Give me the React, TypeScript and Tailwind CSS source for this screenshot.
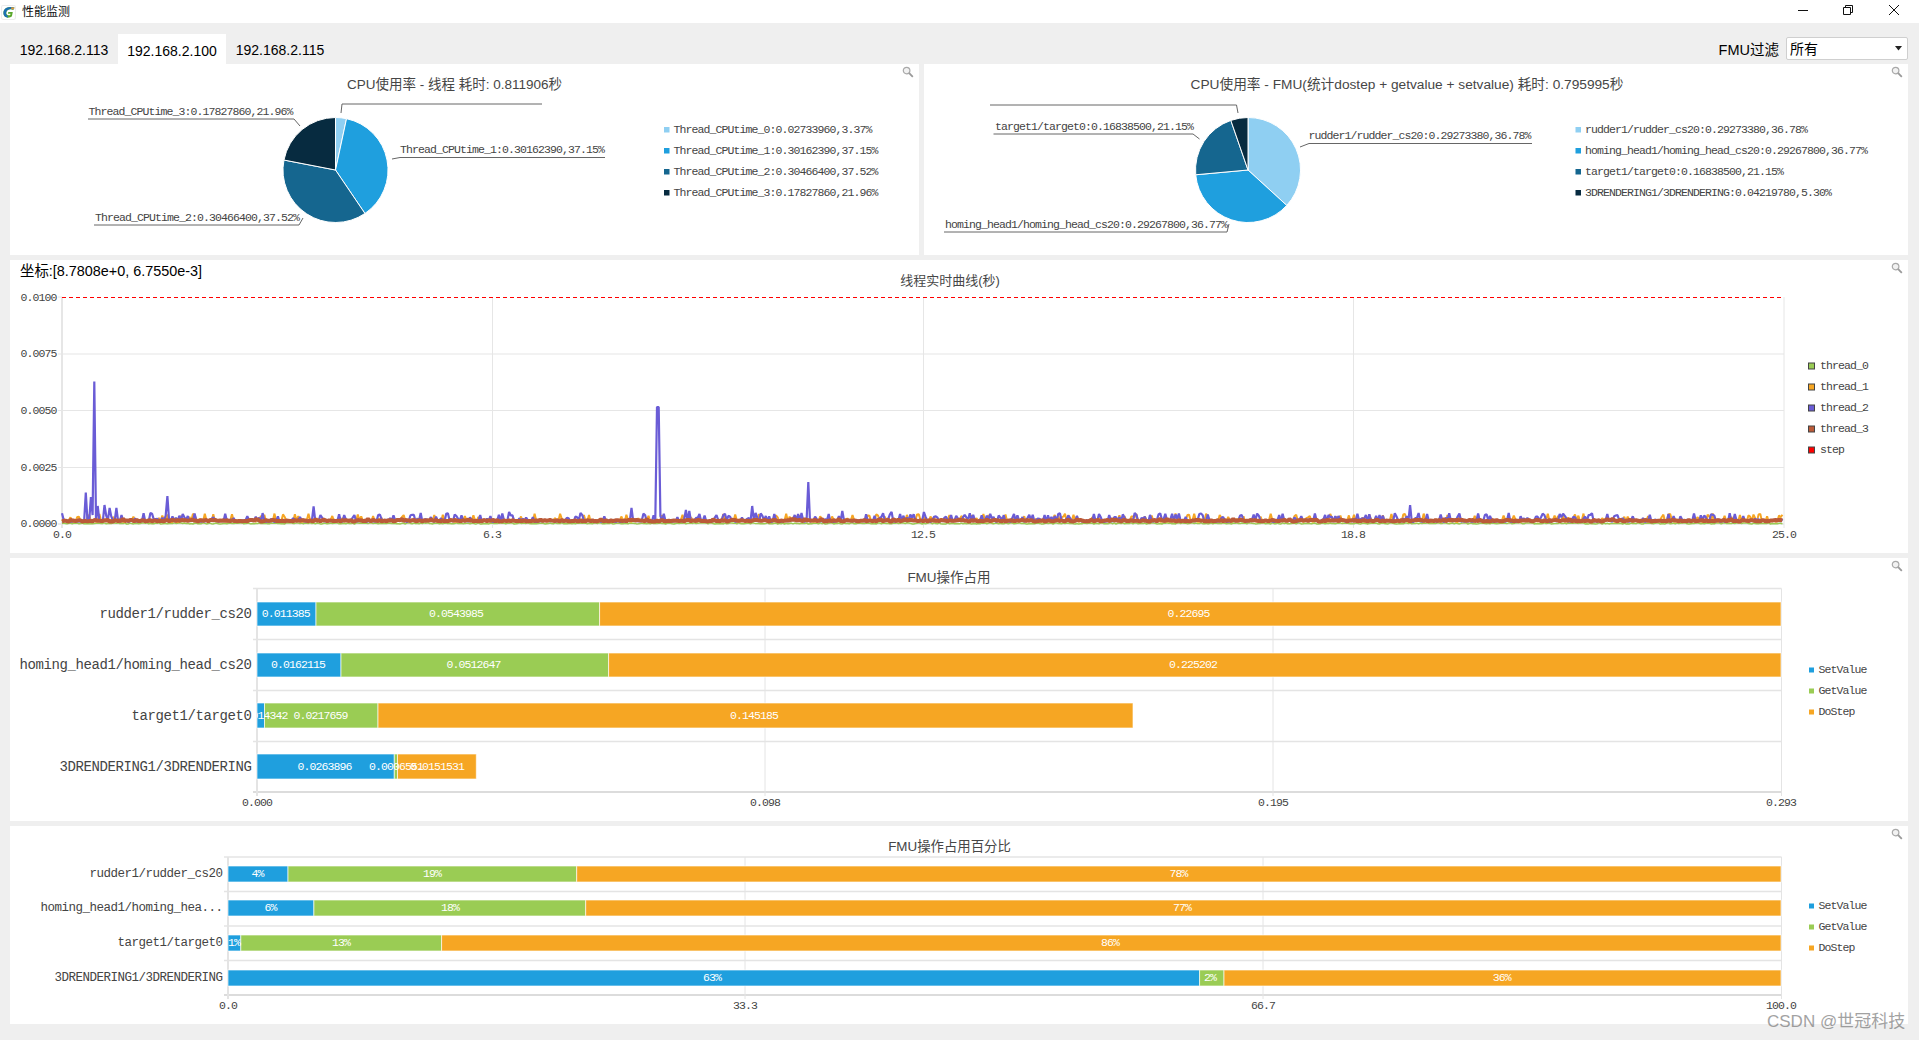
import React from "react";

const MONO = '"Liberation Mono", monospace';
const CJK = '"Liberation Sans", "Noto Sans CJK SC", sans-serif';
const C = { l: "#8fcff2", b: "#1f9fde", d: "#15668f", k: "#072b40", g: "#9acc54", o: "#f6a623", p: "#6a5cd6", r: "#bb5a38" };

function T({ x, y, s, a = "start", size = 11.5, ls = -0.9, fill = "#444", clip }: { x: number; y: number; s: string; a?: "start" | "middle" | "end"; size?: number; ls?: number; fill?: string; clip?: string }) {
  return (
    <text x={x} y={y - 0.4} textAnchor={a} dominantBaseline="central" fontFamily={MONO} fontSize={size} letterSpacing={ls} fill={fill} clipPath={clip}>
      {s}
    </text>
  );
}

function Title({ x, y, s, size = 13.5 }: { x: number; y: number; s: string; size?: number }) {
  return (
    <text x={x} y={y} textAnchor="middle" dominantBaseline="central" fontFamily={CJK} fontSize={size} fill="#464646">
      {s}
    </text>
  );
}

function Lens() {
  return (
    <svg width="12" height="12" viewBox="0 0 12 12" className="absolute top-[2px] right-[5px]">
      <circle cx="4.6" cy="4.6" r="3.3" fill="#f2f2f2" stroke="#a9a9a9" strokeWidth="1.2" />
      <path d="M7.2 7.2 L10.8 10.8" stroke="#999" strokeWidth="1.8" />
    </svg>
  );
}

function Pie({ cx, cy, r, vals }: { cx: number; cy: number; r: number; vals: [number, string][] }) {
  let a = -Math.PI / 2;
  return (
    <g>
      {vals.map(([v, c], i) => {
        const b = a + (v / 100) * Math.PI * 2;
        const d = `M${cx} ${cy}L${cx + r * Math.cos(a)} ${cy + r * Math.sin(a)}A${r} ${r} 0 ${v > 50 ? 1 : 0} 1 ${cx + r * Math.cos(b)} ${cy + r * Math.sin(b)}Z`;
        a = b;
        return <path key={i} d={d} fill={c} stroke="#fff" strokeWidth="1" />;
      })}
    </g>
  );
}

function Leader({ pts }: { pts: string }) {
  return <polyline points={pts} fill="none" stroke="#666" strokeWidth="1" />;
}

const LEG_Y = [129.5, 150.5, 171.5, 192.5];
function PieLegend({ x, tx, items }: { x: number; tx: number; items: [string, string][] }) {
  return (
    <g>
      {items.map(([s, c], i) => (
        <g key={s}>
          <rect x={x} y={LEG_Y[i] - 2.5} width="5.5" height="5.5" fill={c} />
          <T x={tx} y={LEG_Y[i]} s={s} />
        </g>
      ))}
    </g>
  );
}

function rng(seed: number) {
  let s = seed;
  return () => {
    s = (s * 1664525 + 1013904223) >>> 0;
    let t = s ^ (s >>> 15);
    t = Math.imul(t, 0x2c1b3c6d) >>> 0;
    t ^= t >>> 12;
    return (t >>> 0) / 4294967296;
  };
}

const SPIKES: [number, number][] = [
  [86.5, 492.5], [91, 497], [93.5, 381.5], [98.5, 506], [104, 505], [109, 508], [116, 508], [121, 515], [151, 513], [168, 496], [187, 516],
  [313, 506.5], [320, 515], [355, 515], [379, 515], [421.5, 513], [457, 516], [490, 516], [509, 512], [581, 513], [632, 508], [645, 515], [657.5, 407], [658.5, 407],
  [686, 510], [689, 511], [753, 506], [755, 513], [765, 516], [795, 515], [798, 514], [801.5, 513], [808, 482], [809, 482], [829, 514], [842, 511], [892, 512], [924, 512], [964, 515],
  [1109, 515], [1200, 514], [1280, 515], [1339, 516], [1380, 515], [1410, 505], [1418, 513], [1490, 516], [1560, 514], [1607, 514], [1668, 514], [1735, 514],
];

const STEP = 1.7;
function series(seed: number, fn: (r: number, r2: number) => number, spikes?: [number, number][]) {
  const r = rng(seed);
  const ys: number[] = [];
  const n = Math.floor((1784 - 62) / STEP);
  for (let i = 0; i <= n; i++) ys.push(fn(r(), r()));
  if (spikes) {
    for (const [x, top] of spikes) {
      const i = Math.round((x - 62) / STEP);
      ys[i] = top;
    }
  }
  return ys.map((y, i) => `${i ? "L" : "M"}${(62 + i * STEP).toFixed(1)} ${y.toFixed(1)}`).join("");
}

const GREEN = series(11, (a) => 524 - a * 1.2);
const ORANGE = series(23, (a, b) => 522 - 2 * a - (b > 0.78 ? 2 + a * 4.5 : 0));
const PURPLE = series(37, (a, b) => 522 - 2 * a - (b > 0.7 ? 2 + a * 5 : 0), SPIKES);
const BROWN = series(53, (a, b) => 521.5 - 1.6 * a - (b > 0.93 ? 1.2 : 0));

function Seg({ x0, x1, y0, y1, c }: { x0: number; x1: number; y0: number; y1: number; c: string }) {
  return <rect x={x0} y={y0} width={x1 - x0} height={y1 - y0} fill={c} stroke="#fff" strokeOpacity="0.65" strokeWidth="1" />;
}

function Frame({ l, r, rows, vs }: { l: number; r: number; rows: number[]; vs: number[] }) {
  return (
    <g stroke="#e4e4e4" strokeWidth="1">
      {rows.map((y, i) => (
        <line key={i} x1={l - 4} x2={r} y1={y} y2={y} strokeWidth={i === rows.length - 1 ? 2 : 1.3} stroke={i === rows.length - 1 ? "#dcdcdc" : "#e4e4e4"} />
      ))}
      {vs.map((x, i) => (
        <line key={i} x1={x} x2={x} y1={rows[0]} y2={rows[rows.length - 1] + 4} strokeWidth={i === 0 ? 2 : 1} />
      ))}
    </g>
  );
}

function BarLegend({ ys }: { ys: number[] }) {
  const items: [string, string][] = [["SetValue", C.b], ["GetValue", C.g], ["DoStep", C.o]];
  return (
    <g>
      {items.map(([s, c], i) => (
        <g key={s}>
          <rect x="1809" y={ys[i] - 2.5} width="5" height="5" fill={c} />
          <T x={1818.5} y={ys[i]} s={s} />
        </g>
      ))}
    </g>
  );
}

type Row = { label: string; y0: number; y1: number; ly: number; tY: number; segs: [number, number, string, number, string][] };

const ROWS_A: Row[] = [
  { label: "rudder1/rudder_cs20", y0: 602, y1: 626, ly: 614.5, tY: 613.5, segs: [[257, 316, C.b, 285.7, "0.011385"], [316, 599.6, C.g, 456, "0.0543985"], [599.6, 1781, C.o, 1188.5, "0.22695"]] },
  { label: "homing_head1/homing_head_cs20", y0: 653, y1: 677, ly: 665.5, tY: 664.5, segs: [[257, 341, C.b, 298, "0.0162115"], [341, 608.6, C.g, 473.5, "0.0512647"], [608.6, 1781, C.o, 1193, "0.225202"]] },
  { label: "target1/target0", y0: 703, y1: 728, ly: 716.5, tY: 715.5, segs: [[257, 264.5, C.b, 260.5, "0.0014342"], [264.5, 378, C.g, 320.4, "0.0217659"], [378, 1133, C.o, 754, "0.145185"]] },
  { label: "3DRENDERING1/3DRENDERING", y0: 754, y1: 779, ly: 767.5, tY: 766.5, segs: [[257, 394.3, C.b, 324.5, "0.0263896"], [394.3, 397.5, C.g, 396, "0.0006551"], [397.5, 476.3, C.o, 437, "0.0151531"]] },
];

const ROWS_B: Row[] = [
  { label: "rudder1/rudder_cs20", y0: 866, y1: 882, ly: 874.5, tY: 873.5, segs: [[228, 288, C.b, 257.5, "4%"], [288, 576.7, C.g, 432, "19%"], [576.7, 1781, C.o, 1178.6, "78%"]] },
  { label: "homing_head1/homing_hea...", y0: 900, y1: 916, ly: 908.5, tY: 908, segs: [[228, 313.9, C.b, 270.6, "6%"], [313.9, 585.7, C.g, 450, "18%"], [585.7, 1781, C.o, 1182, "77%"]] },
  { label: "target1/target0", y0: 935, y1: 951, ly: 943.5, tY: 942.5, segs: [[228, 240.8, C.b, 234, "1%"], [240.8, 441.6, C.g, 341, "13%"], [441.6, 1781, C.o, 1110, "86%"]] },
  { label: "3DRENDERING1/3DRENDERING", y0: 970, y1: 986, ly: 978.5, tY: 977.5, segs: [[228, 1199.6, C.b, 712, "63%"], [1199.6, 1224, C.g, 1210, "2%"], [1224, 1781, C.o, 1501.7, "36%"]] },
];

function Bars({ rows, rx, size, ls, clip }: { rows: Row[]; rx: number; size: number; ls: number; clip: string }) {
  return (
    <g>
      {rows.map((r) => (
        <g key={r.label}>
          <T x={rx} y={r.ly} s={r.label} a="end" size={size} ls={ls} />
          {r.segs.map(([a, b, c], i) => (
            <Seg key={i} x0={a} x1={b} y0={r.y0} y1={r.y1} c={c} />
          ))}
          {r.segs.map(([, , , tx, s], i) => (
            <T key={i} x={tx} y={r.tY} s={s} a="middle" fill="#fff" clip={clip} />
          ))}
        </g>
      ))}
    </g>
  );
}

function Tab({ label, active }: { label: string; active?: boolean }) {
  return (
    <div className={active ? "w-[108px] h-[30px] flex items-center justify-center bg-white pt-[5px] text-[14px] text-black" : "w-[108px] h-[30px] flex items-center justify-center pt-[3px] text-[14px] text-black"}>
      {label}
    </div>
  );
}

export default function App() {
  return (
    <div className="w-full h-[1040px] overflow-hidden flex flex-col bg-[#efefef] relative font-['Liberation_Sans','Noto_Sans_CJK_SC',sans-serif]">
      <div className="h-[23px] bg-white flex items-center shrink-0">
        <svg width="15" height="15" viewBox="0 0 14 14" className="ml-[1px] mt-[1px]">
          <rect x="0.5" y="0.5" width="13" height="13" rx="1.5" fill="#fff" stroke="#ececec" />
          <path d="M12.6 2.6 C9.4 1.2 4.6 1.6 2.8 5 C1.4 8.4 3 11.8 6.4 11.8 C8.2 11.8 9.6 11 10.2 10.4 L11 6.6 H6.8 L6.4 8.2 H8.9 L8.6 9.4 C6.6 10.2 4.6 9.2 5 6.8 C5.5 4.2 8.8 3.2 11.4 4.4 Z" fill="#5aa82c" />
          <path d="M2.8 5 C1.4 8.4 3 11.8 6.4 11.8 L6.2 10 C4.6 9.6 4.4 8 5 6.4 C6 4 9 3.2 11.4 4.4 L12.6 2.6 C9.4 1.2 4.6 1.6 2.8 5 Z" fill="#1b6fb3" />
          <path d="M12.6 2.6 C11.6 2.2 10.6 2 9.6 2 L9.4 3.6 C10.2 3.7 10.8 4 11.4 4.4 Z" fill="#e99a2e" />
        </svg>
        <span className="ml-[6px] text-[12px] text-[#111]">性能监测</span>
        <div className="ml-auto flex items-center mb-[3px]">
          <svg width="10" height="10" viewBox="0 0 10 10" className="mr-[35px]"><path d="M0 5.5H10" stroke="#111" strokeWidth="1" /></svg>
          <svg width="10" height="10" viewBox="0 0 10 10" className="mr-[36px]"><path d="M2.5 2.5V0.5H9.5V7.5H7.5M0.5 2.5H7.5V9.5H0.5Z" fill="none" stroke="#111" strokeWidth="1" /></svg>
          <svg width="10" height="10" viewBox="0 0 10 10" className="mr-[20px]"><path d="M0 0L10 10M10 0L0 10" stroke="#111" strokeWidth="1" /></svg>
        </div>
      </div>

      <div className="h-[41px] flex items-end pl-[10px] pr-[11px] shrink-0">
        <Tab label="192.168.2.113" />
        <Tab label="192.168.2.100" active />
        <Tab label="192.168.2.115" />
        <div className="ml-auto flex items-center mb-[4px]">
          <span className="text-[14.5px] leading-[20px] text-black mr-[7px] mt-[3px]">FMU过滤</span>
          <div className="w-[122px] h-[23px] bg-white border border-[#cfcfcf] rounded-[2px] flex items-center pl-[3px] pr-[3px] text-[14px] text-black">
            <span className="mt-[2px]">所有</span>
            <svg width="7" height="5" viewBox="0 0 7 5" className="ml-auto mr-[2px]"><path d="M0 0H7L3.5 4.5Z" fill="#222" /></svg>
          </div>
        </div>
      </div>

      <div className="flex flex-col gap-[5px] pl-[10px] pr-[11px]">
        <div className="flex gap-[5px] h-[191px]">
          <div className="relative w-[909px] bg-white">
            <Lens />
            <svg viewBox="10 64 909 191" className="block w-full h-full">
              <Title x={454.5} y={84} s="CPU使用率 - 线程 耗时: 0.811906秒" />
              <Pie cx={335.5} cy={170} r={52.5} vals={[[3.37, C.l], [37.15, C.b], [37.52, C.d], [21.96, C.k]]} />
              <Leader pts="341,113 342,104 542,104" />
              <Leader pts="88,119 294,119 300,126" />
              <Leader pts="605,157.5 400,157.5 392,159" />
              <Leader pts="94,225 299,225 303,218" />
              <T x={88.5} y={112} s="Thread_CPUtime_3:0.17827860,21.96%" />
              <T x={400} y={150} s="Thread_CPUtime_1:0.30162390,37.15%" />
              <T x={95} y={218} s="Thread_CPUtime_2:0.30466400,37.52%" />
              <PieLegend x={664} tx={673.5} items={[["Thread_CPUtime_0:0.02733960,3.37%", C.l], ["Thread_CPUtime_1:0.30162390,37.15%", C.b], ["Thread_CPUtime_2:0.30466400,37.52%", C.d], ["Thread_CPUtime_3:0.17827860,21.96%", C.k]]} />
            </svg>
          </div>
          <div className="relative flex-1 bg-white">
            <Lens />
            <svg viewBox="924 64 984 191" className="block w-full h-full">
              <Title x={1407} y={84} s="CPU使用率 - FMU(统计dostep + getvalue + setvalue) 耗时: 0.795995秒" size={13.7} />
              <Pie cx={1248} cy={170} r={52.5} vals={[[36.78, C.l], [36.77, C.b], [21.15, C.d], [5.3, C.k]]} />
              <Leader pts="1238,113 1236.5,105 990,105" />
              <Leader pts="993.5,134 1193,134 1199.5,139" />
              <Leader pts="944,232 1227,232 1229,224" />
              <Leader pts="1532,143.5 1309,143.5 1300,147" />
              <T x={995} y={127} s="target1/target0:0.16838500,21.15%" />
              <T x={945} y={225} s="homing_head1/homing_head_cs20:0.29267800,36.77%" />
              <T x={1308.5} y={136} s="rudder1/rudder_cs20:0.29273380,36.78%" />
              <PieLegend x={1575.5} tx={1585} items={[["rudder1/rudder_cs20:0.29273380,36.78%", C.l], ["homing_head1/homing_head_cs20:0.29267800,36.77%", C.b], ["target1/target0:0.16838500,21.15%", C.d], ["3DRENDERING1/3DRENDERING:0.04219780,5.30%", C.k]]} />
            </svg>
          </div>
        </div>

        <div className="relative h-[293px] bg-white">
          <Lens />
          <div className="absolute left-[10px] top-[2px] text-[14.4px] leading-[18px] text-black">坐标:[8.7808e+0, 6.7550e-3]</div>
          <svg viewBox="10 260 1898 293" className="block w-full h-full">
            <Title x={950} y={280} s="线程实时曲线(秒)" size={13} />
            <g stroke="#e6e6e6" strokeWidth="1">
              {[354, 410.5, 467.5].map((y) => <line key={y} x1={58} x2={1784} y1={y} y2={y} strokeWidth="1.2" />)}
              {[492.5, 923.5, 1353.5, 1784].map((x) => <line key={x} x1={x} x2={x} y1={297} y2={528} />)}
              <line x1={62} x2={62} y1={297} y2={528} strokeWidth="2" />
              <line x1={58} x2={62} y1={297} y2={297} />
              <line x1={58} x2={1784} y1={524} y2={524} strokeWidth="1.5" />
            </g>
            <line x1={62} x2={1784} y1={297.5} y2={297.5} stroke="#f00" strokeWidth="1" strokeDasharray="4 3" />
            {[["0.0100", 297.5], ["0.0075", 354], ["0.0050", 410.5], ["0.0025", 467.5], ["0.0000", 524]].map(([s, y]) => (
              <T key={s as string} x={56.5} y={y as number} s={s as string} a="end" />
            ))}
            {[["0.0", 62], ["6.3", 492], ["12.5", 923], ["18.8", 1353], ["25.0", 1784]].map(([s, x]) => (
              <T key={s as string} x={x as number} y={535} s={s as string} a="middle" />
            ))}
            <g fill="none" strokeLinejoin="bevel">
              <path d={GREEN} stroke={C.g} strokeWidth="1.5" />
              <path d={ORANGE} stroke={C.o} strokeWidth="2" />
              <path d={PURPLE} stroke={C.p} strokeWidth="2.2" />
              <path d={BROWN} stroke={C.r} strokeWidth="4" />
            </g>
            {[["thread_0", C.g, 366], ["thread_1", C.o, 387], ["thread_2", C.p, 408], ["thread_3", C.r, 429], ["step", "#f00", 450]].map(([s, c, y]) => (
              <g key={s as string}>
                <rect x={1808.5} y={(y as number) - 3} width="6" height="6" fill={c as string} stroke="#444" strokeWidth="1" />
                <T x={1820} y={y as number} s={s as string} />
              </g>
            ))}
          </svg>
        </div>

        <div className="relative h-[263px] bg-white">
          <Lens />
          <svg viewBox="10 558 1898 263" className="block w-full h-full">
            <defs><clipPath id="clipA"><rect x="257" y="558" width="1600" height="263" /></clipPath></defs>
            <Title x={949} y={577.5} s="FMU操作占用" size={13.5} />
            <Frame l={257} r={1781.5} rows={[588.5, 639.5, 690.5, 741.5, 792]} vs={[257, 765, 1273, 1781.5]} />
            <Bars rows={ROWS_A} rx={251.5} size={14} ls={-0.4} clip="url(#clipA)" />
            {[["0.000", 257], ["0.098", 765], ["0.195", 1273], ["0.293", 1781]].map(([s, x]) => (
              <T key={s as string} x={x as number} y={803} s={s as string} a="middle" />
            ))}
            <BarLegend ys={[670, 691, 712]} />
          </svg>
        </div>

        <div className="relative h-[198px] bg-white">
          <Lens />
          <svg viewBox="10 826 1898 198" className="block w-full h-full">
            <defs><clipPath id="clipB"><rect x="228" y="826" width="1600" height="198" /></clipPath></defs>
            <Title x={949.5} y={846} s="FMU操作占用百分比" size={13.4} />
            <Frame l={228} r={1781.5} rows={[857, 891.5, 926, 960.5, 995]} vs={[228, 745, 1263, 1781.5]} />
            <Bars rows={ROWS_B} rx={222.5} size={12.5} ls={-0.5} clip="url(#clipB)" />
            {[["0.0", 228], ["33.3", 745], ["66.7", 1263], ["100.0", 1781]].map(([s, x]) => (
              <T key={s as string} x={x as number} y={1006} s={s as string} a="middle" />
            ))}
            <BarLegend ys={[906, 927, 948]} />
          </svg>
        </div>
      </div>

      <div className="absolute left-[1767px] top-[1011px] text-[17px] leading-[22px] text-[#666] opacity-60 whitespace-nowrap">CSDN @世冠科技</div>
    </div>
  );
}
